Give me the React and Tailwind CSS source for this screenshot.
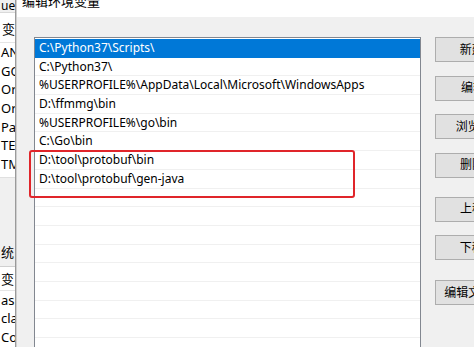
const font = "font-['Noto_Sans','Noto_Sans_CJK_SC',sans-serif]";

const paths = [
  'C:\\Python37\\Scripts\\',
  'C:\\Python37\\',
  '%USERPROFILE%\\AppData\\Local\\Microsoft\\WindowsApps',
  'D:\\ffmmg\\bin',
  '%USERPROFILE%\\go\\bin',
  'C:\\Go\\bin',
  'D:\\tool\\protobuf\\bin',
  'D:\\tool\\protobuf\\gen-java',
];

const rows = [...paths, ...Array(9).fill('')];

function LeftStrip() {
  const upper = ['AN', 'GO', 'Or', 'Or', 'Pa', 'TE', 'TM'];
  const lower = ['asl', 'cla', 'Co'];
  return (
    <div className="w-[15px] shrink-0 overflow-hidden flex flex-col text-[13px] text-black leading-none">
      <div className="h-[13px] bg-[#f0f0f0] border-b border-[#d9d9d9] flex items-end whitespace-nowrap pl-[1px] text-[12px]">uer</div>
      <div className="bg-white">
        <div className="h-[30px] flex items-center pl-[2px] pt-[4px] border-b border-[#e5e5e5]">变</div>
        {upper.map((t, i) => (
          <div key={i} className="h-[18.7px] flex items-center pl-[1px] whitespace-nowrap">{t}</div>
        ))}
        <div className="h-[4px] border-b border-[#e0e0e0]" />
      </div>
      <div className="h-[90px] bg-[#f0f0f0] flex items-end pb-[7px] pl-[1px]">统</div>
      <div className="flex-1 bg-white border-t border-[#d0d0d0]">
        <div className="h-[24px] flex items-center pl-[1px] pt-[3px] bg-white border-b border-[#e5e5e5]">变</div>
        {lower.map((t, i) => (
          <div key={i} className="h-[18.7px] flex items-center pl-[1px] whitespace-nowrap">{t}</div>
        ))}
      </div>
    </div>
  );
}

function Btn({ label, className = '' }) {
  return (
    <div className={`h-[25px] w-[90px] shrink-0 bg-[#e1e1e1] border border-[#adadad] flex items-center justify-center text-[12px] text-black whitespace-nowrap ${className}`}>
      {label}
    </div>
  );
}

export default function App() {
  return (
    <div className={`relative flex h-[347px] w-[474px] overflow-hidden bg-[#f0f0f0] ${font}`}>
      <LeftStrip />
      <div className="w-px shrink-0 bg-[#9a9a9a]" />
      <div className="w-px shrink-0 bg-[#cfcfcf]" />

      <div className="flex-1 flex flex-col min-w-0">
        <div className="h-[17px] shrink-0 bg-white overflow-hidden pl-[5px]">
          <div className="mt-[-5px] text-[13px] leading-[13px] text-black whitespace-nowrap">编辑环境变量</div>
        </div>

        <div className="flex-1 flex pl-[17px] pt-[20px] gap-[14px] min-h-0">
          <div className="w-[387px] shrink-0 bg-white border border-[#828790] border-b-0 pt-px overflow-hidden">
            {rows.map((p, i) => (
              <div
                key={i}
                className={`h-[18.7px] flex items-center pl-[4px] text-[12px] whitespace-nowrap border-b ${
                  i === 0 ? 'bg-[#0078d7] text-white border-[#0078d7]' : 'text-black border-[#f0f0f0]'
                }`}
              >
                {p}
              </div>
            ))}
          </div>

          <div className="flex flex-col gap-[13.5px] shrink-0">
            <Btn label="新建(N)" />
            <Btn label="编辑(E)" />
            <Btn label="浏览(B)..." />
            <Btn label="删除(D)" />
            <Btn label="上移(U)" className="mt-[5.5px]" />
            <Btn label="下移(O)" />
            <Btn label="编辑文本(T)..." className="mt-[6.5px]" />
          </div>
        </div>
      </div>

      <div className="absolute left-[29px] top-[150px] w-[326px] h-[48px] border-[2.5px] border-[#e0252a] rounded-[3px] pointer-events-none" />
    </div>
  );
}
